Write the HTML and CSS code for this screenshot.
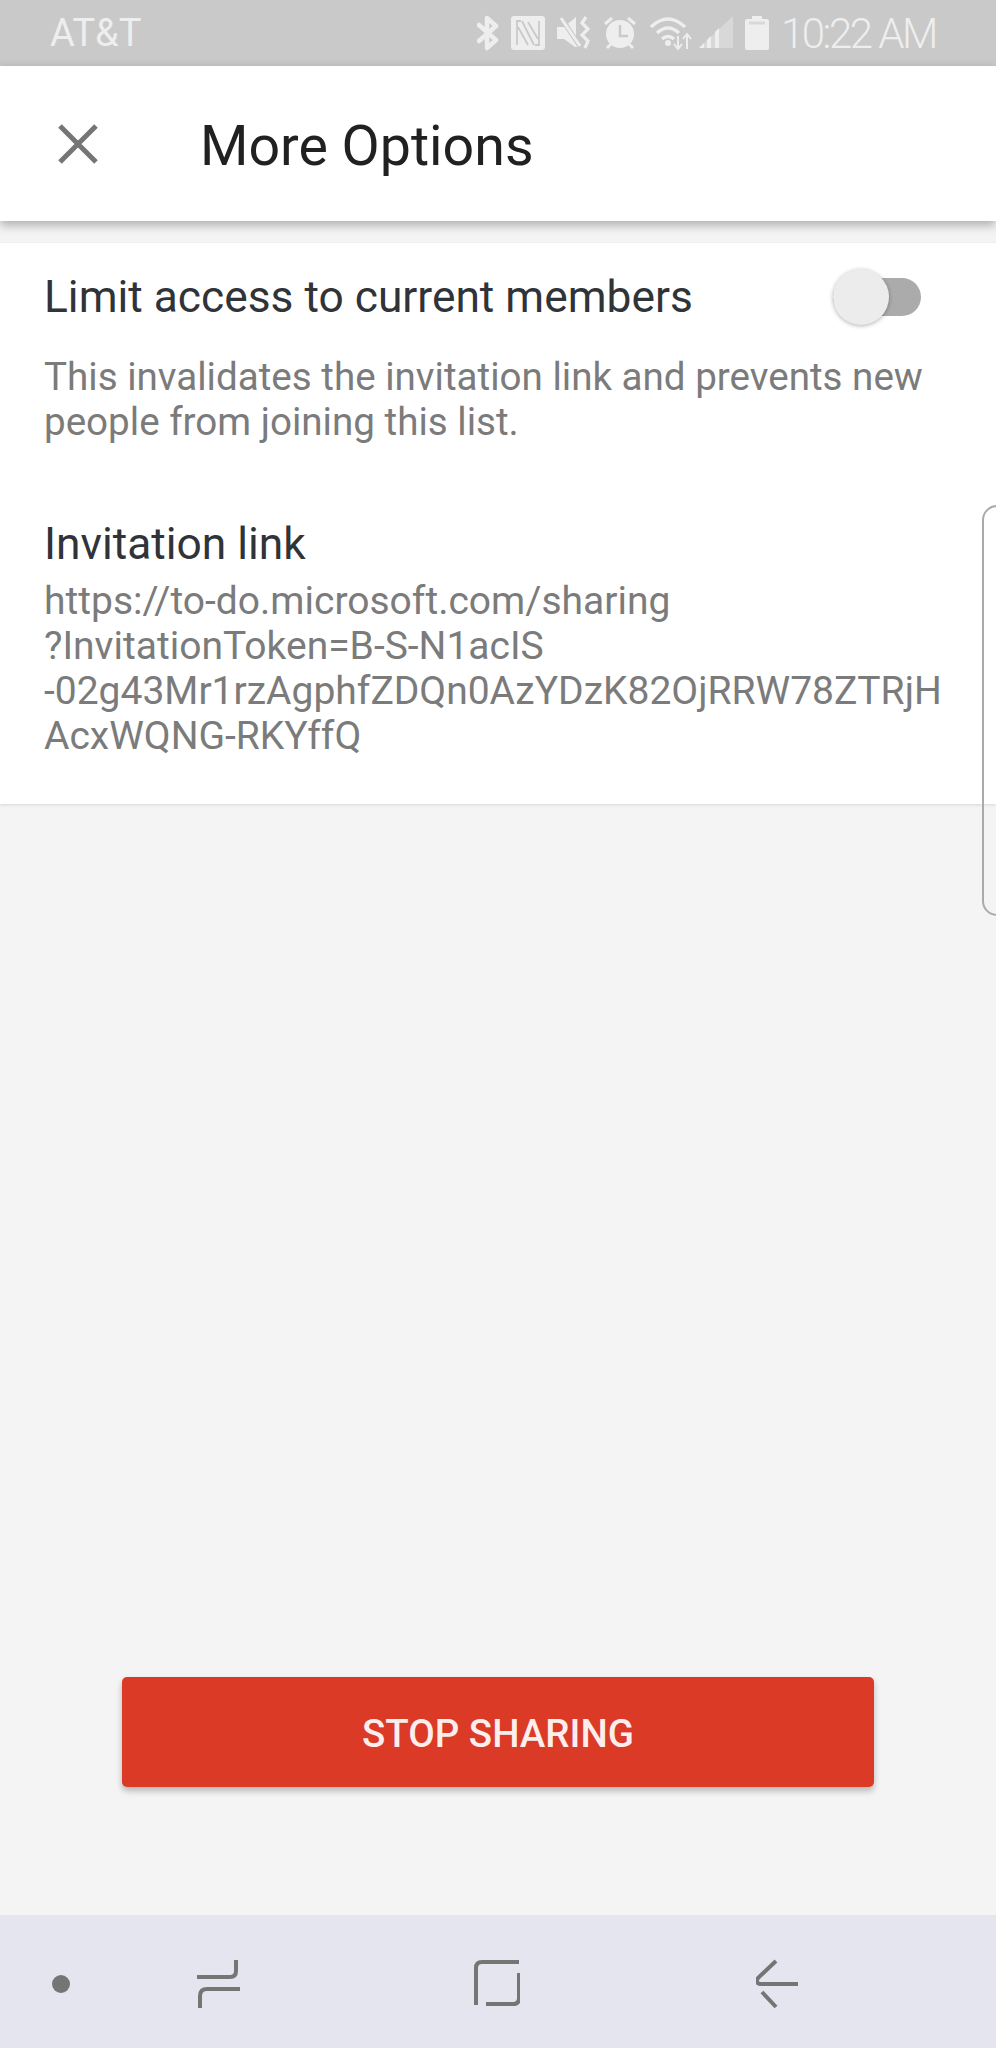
FILE: index.html
```html
<!DOCTYPE html>
<html lang="en">
<head>
    <meta charset="UTF-8">
    <meta name="viewport" content="width=device-width, initial-scale=1.0">
    <title>More Options</title>
    <link rel="stylesheet" href="styles.css">
</head>
<body>

    <div class="status-bar">
        <span class="carrier">AT&amp;T</span>
        <div class="status-icons">
            <!-- bluetooth -->
            <svg width="22" height="36" viewBox="0 0 22 36"><path d="M2 10 L19 25 L10 33 V3 L19 11 L2 26" fill="none" stroke="#eee" stroke-width="4.5" stroke-linejoin="round" stroke-linecap="round"/></svg>
            <!-- nfc -->
            <svg width="34" height="36" viewBox="0 0 34 36"><rect y="1" width="34" height="34" rx="3" fill="#eee"/><path d="M6 30 V6 H10 M28 6 V30 H24 M11 6 L23 30 M17 7 L27 24 M7 12 L17 30" fill="none" stroke="#c9c9c9" stroke-width="1.8"/></svg>
            <!-- vibrate -->
            <svg width="34" height="36" viewBox="0 0 34 36"><path d="M0 12 H7 L19 2 V28 L22 32 H18 L7 24 H0 Z" fill="#eee"/><path d="M3 1 L24 33" stroke="#c9c9c9" stroke-width="5"/><path d="M4 3 L23 31" stroke="#eee" stroke-width="3"/><path d="M29 2 L25 8 L31 14 L25 20 L31 26 L28 33" fill="none" stroke="#eee" stroke-width="3.2"/></svg>
            <!-- alarm -->
            <svg width="34" height="36" viewBox="0 0 34 36"><circle cx="17" cy="19" r="14" fill="#eee"/><path d="M17 10 V21 H25" fill="none" stroke="#c9c9c9" stroke-width="2.5"/><path d="M2 9 L9 3 M32 9 L25 3 M4 33 L8 29 M30 33 L26 29" stroke="#eee" stroke-width="3"/></svg>
            <!-- wifi -->
            <svg class="wifi-icon" width="44" height="36" viewBox="0 0 44 36"><path d="M2 12 Q19 -4 36 12 M8 18 Q19 8 30 18 M13 24 Q19 19 25 24" fill="none" stroke="#eee" stroke-width="3.5"/><circle cx="19" cy="28" r="3" fill="#eee"/><path d="M29 21 V33 M25 29 L29 34 L33 29 M38 34 V20 M34 24 L38 19 L42 24" fill="none" stroke="#eee" stroke-width="2"/></svg>
            <!-- signal -->
            <svg width="34" height="36" viewBox="0 0 34 36"><path d="M0 33 L34 1 V33 Z" fill="#d8d8d8"/><path d="M0 33 L5 28 V33 Z M8 33 V25 L12 21 V33 Z M16 33 V17 L20 13 V33 Z" fill="#eee"/></svg>
            <!-- battery -->
            <svg width="24" height="36" viewBox="0 0 24 36"><path d="M7 1 H17 V4 H22 Q24 4 24 6 V33 Q24 35 22 35 H2 Q0 35 0 33 V6 Q0 4 2 4 H7 Z" fill="#eee"/><path d="M4 8 H20" stroke="#d8d8d8" stroke-width="3"/></svg>
        </div>
        <span class="clock">10:22 AM</span>
    </div>

    <div class="toolbar">
        <svg class="close-icon" width="40" height="40" viewBox="0 0 40 40"><path d="M2 2 L38 38 M38 2 L2 38" stroke="#757575" stroke-width="5"/></svg>
        <h1>More Options</h1>
    </div>

    <div class="content">
        <div class="options-card">
            <div class="option-row">
                <h2>Limit access to current members</h2>
                <div class="toggle"><div class="toggle-thumb"></div></div>
            </div>
            <p class="option-desc">This invalidates the invitation link and prevents new people from joining this list.</p>
            <h2 class="link-title">Invitation link</h2>
            <p class="link-url">https://to-do.microsoft.com/sharing<br>?InvitationToken=B-S-N1acIS<br>-02g43Mr1rzAgphfZDQn0AzYDzK82OjRRW78ZTRjH<br>AcxWQNG-RKYffQ</p>
        </div>
        <button class="stop-btn">STOP SHARING</button>
    </div>

    <div class="edge-handle"></div>

    <div class="nav-bar">
        <div class="nav-dot"></div>
        <svg width="46" height="50" viewBox="0 0 46 50"><path d="M39 1 V12 Q39 18 33 18 H0 M43 30 H10 Q3 30 3 37 V49" fill="none" stroke="#757575" stroke-width="4"/></svg>
        <svg width="46" height="50" viewBox="0 0 46 50"><path d="M2 46 V9 Q2 3 8 3 H45 M45 14 V39 Q45 45 39 45 H12" fill="none" stroke="#757575" stroke-width="4"/></svg>
        <svg width="46" height="50" viewBox="0 0 46 50"><path d="M20 2 L2 19 Q-1 24 4 25 H42 M6 33 L20 48" fill="none" stroke="#757575" stroke-width="4"/></svg>
    </div>

</body>
</html>
```

FILE: styles.css
```css
* {
    margin: 0;
    padding: 0;
    box-sizing: border-box;
    font-family: 'Roboto', sans-serif;
}

body {
    display: flex;
    flex-direction: column;
    height: 2048px;
    overflow: hidden;
    background-color: #f4f4f4;
}

.status-bar {
    display: flex;
    align-items: center;
    height: 66px;
    padding: 0 61px 0 50px;
    background: #c9c9c9;
    color: #eee;
}

.carrier {
    font-size: 38px;
    flex: 1;
}

.status-icons {
    display: flex;
    align-items: center;
    gap: 12px;
}

.wifi-icon {
    margin-right: -6px;
}

.clock {
    width: 154px;
    margin-left: 12px;
    font-size: 42px;
    font-weight: 300;
    letter-spacing: -2.5px;
    white-space: nowrap;
}

.toolbar {
    display: flex;
    align-items: center;
    height: 155px;
    padding-left: 58px;
    background: white;
    box-shadow: 0 4px 10px rgba(0, 0, 0, 0.3);
    position: relative;
}

.toolbar h1 {
    margin-left: 102px;
    padding-top: 6px;
    font-size: 55.5px;
    font-weight: 400;
    color: #212121;
}

.content {
    flex: 1;
    display: flex;
    flex-direction: column;
    padding-top: 22px;
}

.options-card {
    height: 561px;
    padding: 28px 44px 0;
    background: white;
    box-shadow: 0 1px 3px rgba(0, 0, 0, 0.12);
}

.option-row {
    display: flex;
    justify-content: space-between;
    align-items: center;
    padding-right: 31px;
}

h2 {
    font-size: 44.3px;
    font-weight: 400;
    color: #303338;
}

.toggle {
    display: flex;
    align-items: center;
    width: 88px;
    height: 38px;
    border-radius: 19px;
    background: #ababab;
}

.toggle-thumb {
    width: 56px;
    height: 56px;
    border-radius: 50%;
    background: #ececec;
    box-shadow: 0 1px 4px rgba(0, 0, 0, 0.3);
}

.option-desc {
    margin-top: 31px;
    font-size: 38.6px;
    line-height: 45px;
    color: #7b7b7b;
}

.link-title {
    margin-top: 74px;
}

.link-url {
    margin-top: 9px;
    font-size: 39px;
    line-height: 45.1px;
    color: #7b7b7b;
    white-space: nowrap;
}

.stop-btn {
    align-self: center;
    width: 752px;
    height: 110px;
    margin-top: 873px;
    padding-top: 2px;
    border: none;
    border-radius: 5px;
    background: #da3a26;
    color: #fbeeec;
    font-size: 38.5px;
    font-weight: 500;
    box-shadow: 0 4px 6px rgba(0, 0, 0, 0.25);
}

/* samsung edge panel handle */
.edge-handle {
    position: absolute;
    top: 505px;
    left: 982px;
    width: 30px;
    height: 411px;
    border: 2px solid #aaa;
    border-radius: 16px;
}

.nav-bar {
    display: grid;
    grid-template-columns: 197px 277px 282px 1fr;
    align-items: center;
    height: 133px;
    padding-top: 5px;
    background: #e4e5ef;
}

.nav-dot {
    width: 18px;
    height: 18px;
    margin-left: 52px;
    border-radius: 50%;
    background: #757575;
}
```
